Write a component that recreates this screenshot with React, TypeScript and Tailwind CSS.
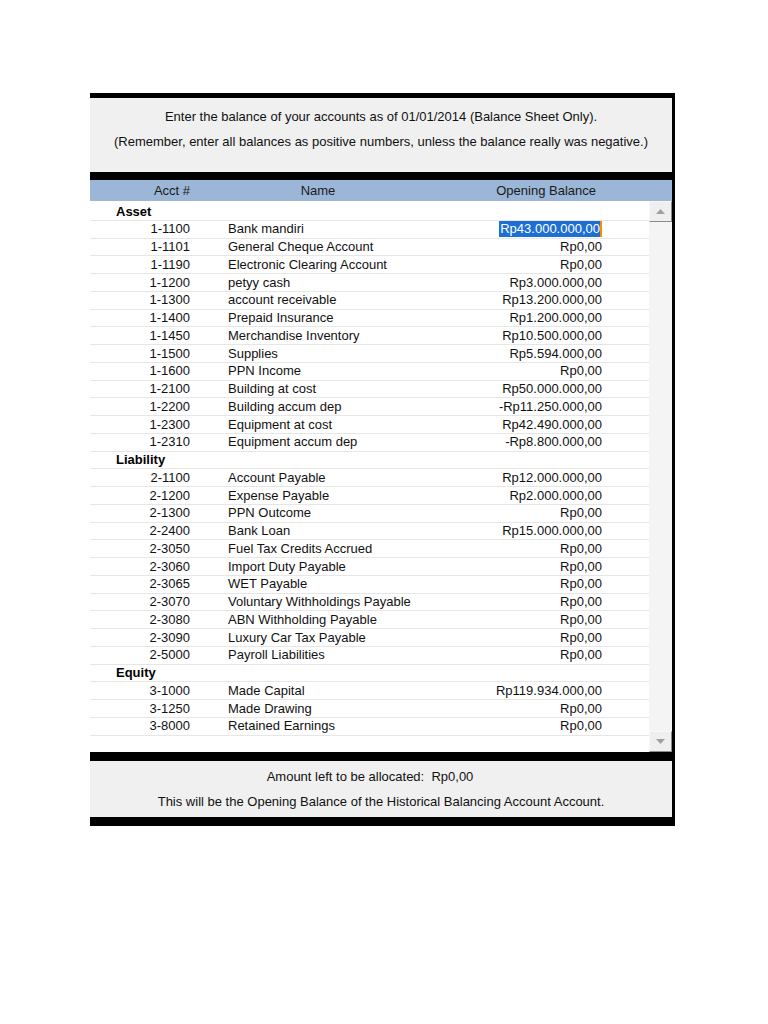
import React from "react";

type Row =
  | { kind: "section"; label: string }
  | { kind: "acct"; num: string; name: string; bal: string; selected?: boolean };

const rows: Row[] = [
  { kind: "section", label: "Asset" },
  { kind: "acct", num: "1-1100", name: "Bank mandiri", bal: "Rp43.000.000,00", selected: true },
  { kind: "acct", num: "1-1101", name: "General Cheque Account", bal: "Rp0,00" },
  { kind: "acct", num: "1-1190", name: "Electronic Clearing Account", bal: "Rp0,00" },
  { kind: "acct", num: "1-1200", name: "petyy cash", bal: "Rp3.000.000,00" },
  { kind: "acct", num: "1-1300", name: "account receivable", bal: "Rp13.200.000,00" },
  { kind: "acct", num: "1-1400", name: "Prepaid Insurance", bal: "Rp1.200.000,00" },
  { kind: "acct", num: "1-1450", name: "Merchandise Inventory", bal: "Rp10.500.000,00" },
  { kind: "acct", num: "1-1500", name: "Supplies", bal: "Rp5.594.000,00" },
  { kind: "acct", num: "1-1600", name: "PPN Income", bal: "Rp0,00" },
  { kind: "acct", num: "1-2100", name: "Building at cost", bal: "Rp50.000.000,00" },
  { kind: "acct", num: "1-2200", name: "Building accum dep", bal: "-Rp11.250.000,00" },
  { kind: "acct", num: "1-2300", name: "Equipment at cost", bal: "Rp42.490.000,00" },
  { kind: "acct", num: "1-2310", name: "Equipment accum dep", bal: "-Rp8.800.000,00" },
  { kind: "section", label: "Liability" },
  { kind: "acct", num: "2-1100", name: "Account Payable", bal: "Rp12.000.000,00" },
  { kind: "acct", num: "2-1200", name: "Expense Payable", bal: "Rp2.000.000,00" },
  { kind: "acct", num: "2-1300", name: "PPN Outcome", bal: "Rp0,00" },
  { kind: "acct", num: "2-2400", name: "Bank Loan", bal: "Rp15.000.000,00" },
  { kind: "acct", num: "2-3050", name: "Fuel Tax Credits Accrued", bal: "Rp0,00" },
  { kind: "acct", num: "2-3060", name: "Import Duty Payable", bal: "Rp0,00" },
  { kind: "acct", num: "2-3065", name: "WET Payable", bal: "Rp0,00" },
  { kind: "acct", num: "2-3070", name: "Voluntary Withholdings Payable", bal: "Rp0,00" },
  { kind: "acct", num: "2-3080", name: "ABN Withholding Payable", bal: "Rp0,00" },
  { kind: "acct", num: "2-3090", name: "Luxury Car Tax Payable", bal: "Rp0,00" },
  { kind: "acct", num: "2-5000", name: "Payroll Liabilities", bal: "Rp0,00" },
  { kind: "section", label: "Equity" },
  { kind: "acct", num: "3-1000", name: "Made Capital", bal: "Rp119.934.000,00" },
  { kind: "acct", num: "3-1250", name: "Made Drawing", bal: "Rp0,00" },
  { kind: "acct", num: "3-8000", name: "Retained Earnings", bal: "Rp0,00" },
];

function Arrow({ up }: { up?: boolean }) {
  return (
    <svg width="9" height="5" viewBox="0 0 9 5">
      {up ? <polygon points="0,5 9,5 4.5,0" fill="#a0a0a0" /> : <polygon points="0,0 9,0 4.5,5" fill="#a0a0a0" />}
    </svg>
  );
}

export default function App() {
  return (
    <div className="w-[768px] h-[1024px] bg-white text-[13px] text-[#111]" style={{ fontFamily: '"Liberation Sans", Arial, sans-serif' }}>
      <div className="pt-[93px] pl-[90px]">
        <div className="w-[585px] border-r-[3px] border-black flex flex-col">
          <div className="h-[5px] bg-black" />
          <div className="h-[74px] bg-[#f0f0f0] flex flex-col items-center pt-[10px] leading-[18px]">
            <div>Enter the balance of your accounts as of 01/01/2014 (Balance Sheet Only).</div>
            <div className="mt-[7px]">(Remember, enter all balances as positive numbers, unless the balance really was negative.)</div>
          </div>
          <div className="h-[8px] bg-black" />
          <div className="h-[21px] bg-[#9bb6d6] flex items-center text-[#1a1a1a]">
            <div className="w-[164px] text-center">Acct #</div>
            <div className="w-[128px] text-center">Name</div>
            <div className="w-[214px] text-right">Opening Balance</div>
          </div>
          <div className="h-[551px] bg-white flex">
            <div className="flex-1 flex flex-col pt-[2px]">
              {rows.map((r, i) =>
                r.kind === "section" ? (
                  <div key={i} className="h-[17.76px] border-b border-[#e6e6e6] flex items-center pl-[26px] font-bold text-black">
                    {r.label}
                  </div>
                ) : (
                  <div key={i} className="h-[17.76px] border-b border-[#e6e6e6] flex items-center">
                    <div className="w-[100px] text-right">{r.num}</div>
                    <div className="w-[280px] pl-[38px] whitespace-nowrap">{r.name}</div>
                    <div className="w-[132px] flex justify-end">
                      {r.selected ? (
                        <span className="bg-[#1d6fd2] text-white pl-[1px] flex items-center h-[16px]">
                          {r.bal}
                          <span className="w-[2px] h-[16px] bg-[#ff8a00]" />
                        </span>
                      ) : (
                        <span>{r.bal}</span>
                      )}
                    </div>
                  </div>
                )
              )}
            </div>
            <div className="w-[23px] bg-[#f4f4f4] flex flex-col justify-between">
              <div className="h-[21px] bg-[#efefef] border border-t-[#f8f8f8] border-l-[#f8f8f8] border-r-[#8a8a8a] border-b-[#8a8a8a] flex items-center justify-center">
                <Arrow up />
              </div>
              <div className="h-[21px] bg-[#efefef] border border-t-[#f8f8f8] border-l-[#f8f8f8] border-r-[#8a8a8a] border-b-[#8a8a8a] flex items-center justify-center">
                <Arrow />
              </div>
            </div>
          </div>
          <div className="h-[9px] bg-black" />
          <div className="h-[56px] bg-[#f0f0f0] flex flex-col items-center pt-[7px] leading-[18px]">
            <div className="pr-[22px]">Amount left to be allocated:&nbsp;&nbsp;Rp0,00</div>
            <div className="mt-[7px]">This will be the Opening Balance of the Historical Balancing Account Account.</div>
          </div>
          <div className="h-[9px] bg-black" />
        </div>
      </div>
    </div>
  );
}
